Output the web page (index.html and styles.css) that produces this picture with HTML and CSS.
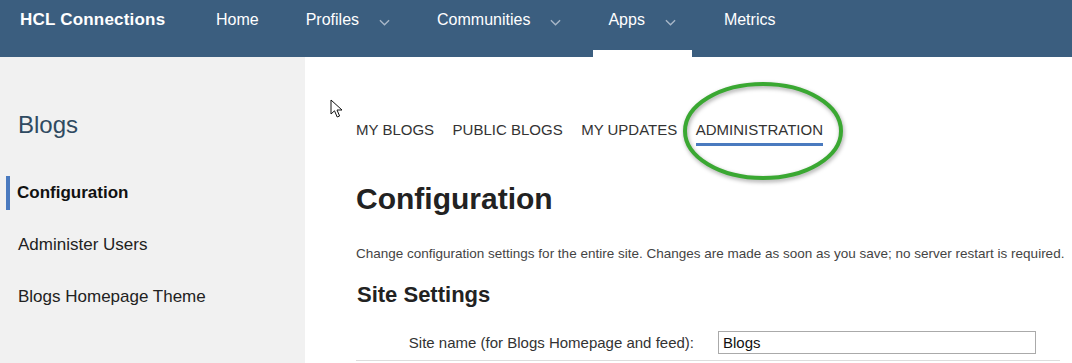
FILE: index.html
```html
<!DOCTYPE html>
<html>
<head>
<meta charset="utf-8">
<link rel="stylesheet" href="styles.css">
</head>
<body>
<header class="topbar">
  <div class="brand">HCL Connections</div>
  <nav class="topnav">
    <a class="navitem">Home</a>
    <a class="navitem">Profiles<svg class="chev" viewBox="0 0 12 7"><polyline points="1,1 6,6 11,1"/></svg></a>
    <a class="navitem">Communities<svg class="chev" viewBox="0 0 12 7"><polyline points="1,1 6,6 11,1"/></svg></a>
    <a class="navitem active">Apps<svg class="chev" viewBox="0 0 12 7"><polyline points="1,1 6,6 11,1"/></svg></a>
    <a class="navitem">Metrics</a>
  </nav>
</header>
<div class="layout">
  <aside class="sidebar">
    <h2 class="side-title">Blogs</h2>
    <ul class="sidenav">
      <li class="sideitem current">Configuration</li>
      <li class="sideitem">Administer Users</li>
      <li class="sideitem">Blogs Homepage Theme</li>
    </ul>
  </aside>
  <main class="content">
    <svg class="cursor" viewBox="0 0 14 20"><path d="M1 1 L1 15 L4.5 11.8 L7.2 18 L9.6 17 L7 11 L12 11 Z" fill="#fff" stroke="#111" stroke-width="1" stroke-linejoin="round"/></svg>
    <div class="tabs">
      <span class="tab">MY BLOGS</span>
      <span class="tab">PUBLIC BLOGS</span>
      <span class="tab">MY UPDATES</span>
      <span class="tab selected">ADMINISTRATION</span>
      <svg class="highlight" viewBox="0 0 170 106"><ellipse cx="82" cy="50" rx="78" ry="47" fill="none" stroke="#3aa832" stroke-width="4"/></svg>
    </div>
    <h1 class="page-title">Configuration</h1>
    <p class="desc">Change configuration settings for the entire site. Changes are made as soon as you save; no server restart is required.</p>
    <h3 class="section-title">Site Settings</h3>
    <div class="form-row">
      <label class="form-label">Site name (for Blogs Homepage and feed):</label>
      <div class="input">Blogs</div>
    </div>
  </main>
</div>
</body>
</html>
```
FILE: styles.css
```css
html, body {
  margin: 0;
  padding: 0;
  background: #fff;
  font-family: "Liberation Sans", Arial, sans-serif;
  overflow: hidden;
}
.topbar {
  height: 57px;
  background: #3b5e7f;
  display: flex;
  align-items: stretch;
  color: #fff;
}
.brand {
  font-weight: bold;
  font-size: 17px;
  padding: 10px 0 0 20px;
  width: 181px;
  letter-spacing: 0.2px;
}
.topnav {
  display: flex;
  align-items: stretch;
  gap: 17px;
}
.navitem {
  display: flex;
  align-items: flex-start;
  padding: 11px 15px 0 15px;
  font-size: 16px;
  box-sizing: border-box;
  height: 57px;
  color: #fff;
}
.navitem.active {
  border-bottom: 7px solid #fff;
  padding-right: 16px;
}
.chev {
  width: 11px;
  height: 7px;
  margin: 8px 0 0 20px;
  fill: none;
  stroke: #a8b7c8;
  stroke-width: 1.5;
}
.layout {
  display: flex;
  height: 306px;
}
.sidebar {
  width: 305px;
  background: #f1f1f1;
  flex: none;
}
.side-title {
  margin: 54px 0 0 18px;
  font-size: 24px;
  font-weight: normal;
  color: #2f4a61;
}
.sidenav {
  list-style: none;
  margin: 37px 0 0 6px;
  padding: 0;
}
.sideitem {
  font-size: 17px;
  color: #222;
  height: 34px;
  line-height: 34px;
  padding-left: 8px;
  border-left: 4px solid transparent;
  margin-bottom: 18px;
}
.sideitem.current {
  font-weight: bold;
  color: #111;
  border-left-color: #4a7abf;
  padding-left: 7px;
}
.content {
  position: relative;
  flex: 1;
  padding-left: 51px;
}
.cursor {
  position: absolute;
  left: 25px;
  top: 42px;
  width: 14px;
  height: 20px;
}
.tabs {
  position: relative;
  display: flex;
  gap: 18.5px;
  margin-top: 64px;
  width: max-content;
}
.tab {
  font-size: 15px;
  color: #333;
  padding-bottom: 5px;
  border-bottom: 3px solid transparent;
}
.tab.selected {
  border-bottom-color: #4a7abf;
}
.highlight {
  position: absolute;
  right: -28px;
  top: -40px;
  width: 170px;
  height: 106px;
  filter: drop-shadow(1px 2px 2px rgba(0,0,0,0.35));
}
.page-title {
  margin: 36px 0 0 0;
  font-size: 30px;
  font-weight: bold;
  color: #222;
}
.desc {
  margin: 30px 0 0 0;
  font-size: 13.5px;
  color: #444;
}
.section-title {
  margin: 21px 0 0 1px;
  font-size: 22px;
  font-weight: bold;
  color: #222;
}
.form-row {
  display: flex;
  align-items: center;
  margin-top: 23px;
  padding-bottom: 6px;
  border-bottom: 1px solid #ddd;
  width: 704px;
}
.form-label {
  width: 362px;
  text-align: right;
  font-size: 15px;
  color: #333;
  padding-right: 24px;
  box-sizing: border-box;
}
.input {
  width: 318px;
  height: 23px;
  box-sizing: border-box;
  border: 1px solid #aaa;
  font-size: 15px;
  line-height: 21px;
  padding-left: 4px;
  color: #111;
}
```
